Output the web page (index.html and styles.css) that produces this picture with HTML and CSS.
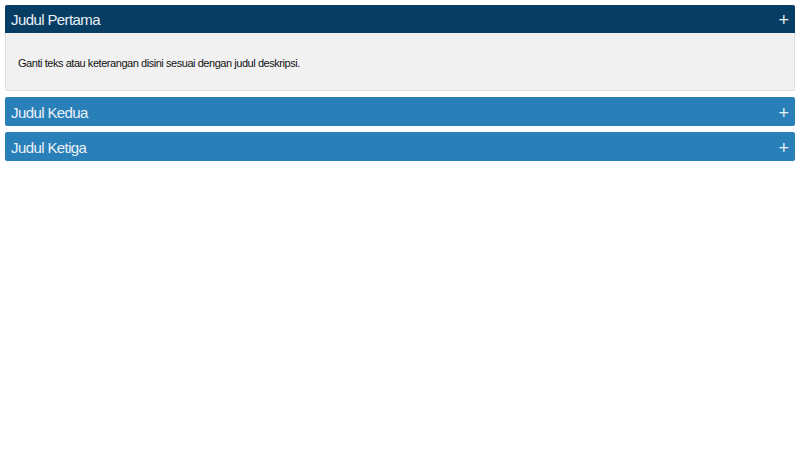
FILE: index.html
```html
<!DOCTYPE html>
<html>
<head>
<meta charset="utf-8">
<link rel="stylesheet" href="styles.css">
</head>
<body>
<div class="accordion">
  <div class="item open">
    <div class="head"><span class="title">Judul Pertama</span><span class="icon">+</span></div>
    <div class="panel"><p>Ganti teks atau keterangan disini sesuai dengan judul deskripsi.</p></div>
  </div>
  <div class="item">
    <div class="head"><span class="title">Judul Kedua</span><span class="icon">+</span></div>
  </div>
  <div class="item">
    <div class="head"><span class="title">Judul Ketiga</span><span class="icon">+</span></div>
  </div>
</div>
</body>
</html>
```
FILE: styles.css
```css
html, body { margin: 0; padding: 0; background: #fff; }
body { font-family: "Liberation Sans", Arial, sans-serif; }
.accordion { padding: 5px; display: flex; flex-direction: column; gap: 6px; }
.head {
  display: flex; justify-content: space-between; align-items: center;
  height: 29px; padding: 0 6px 0 6px;
  background: #2980b9; color: #e9f1f7;
  border-radius: 2px;
}
.title { font-size: 15px; letter-spacing: -0.6px; margin-top: 1px; }
.item.open .head { background: #073d63; border-radius: 2px 2px 0 0; height: 28px; }
.icon { font-size: 18px; line-height: 1; margin-top: 2px; }
.panel {
  background: #f1f1f1; border: 1px solid #dedede; border-top: none;
  border-radius: 0 0 2px 2px; height: 58px; box-sizing: border-box;
  padding: 0 12px; display: flex; align-items: center;
}
.panel p { margin: 0; font-size: 11px; letter-spacing: -0.45px; color: #111; margin-top: 2px; }
```
